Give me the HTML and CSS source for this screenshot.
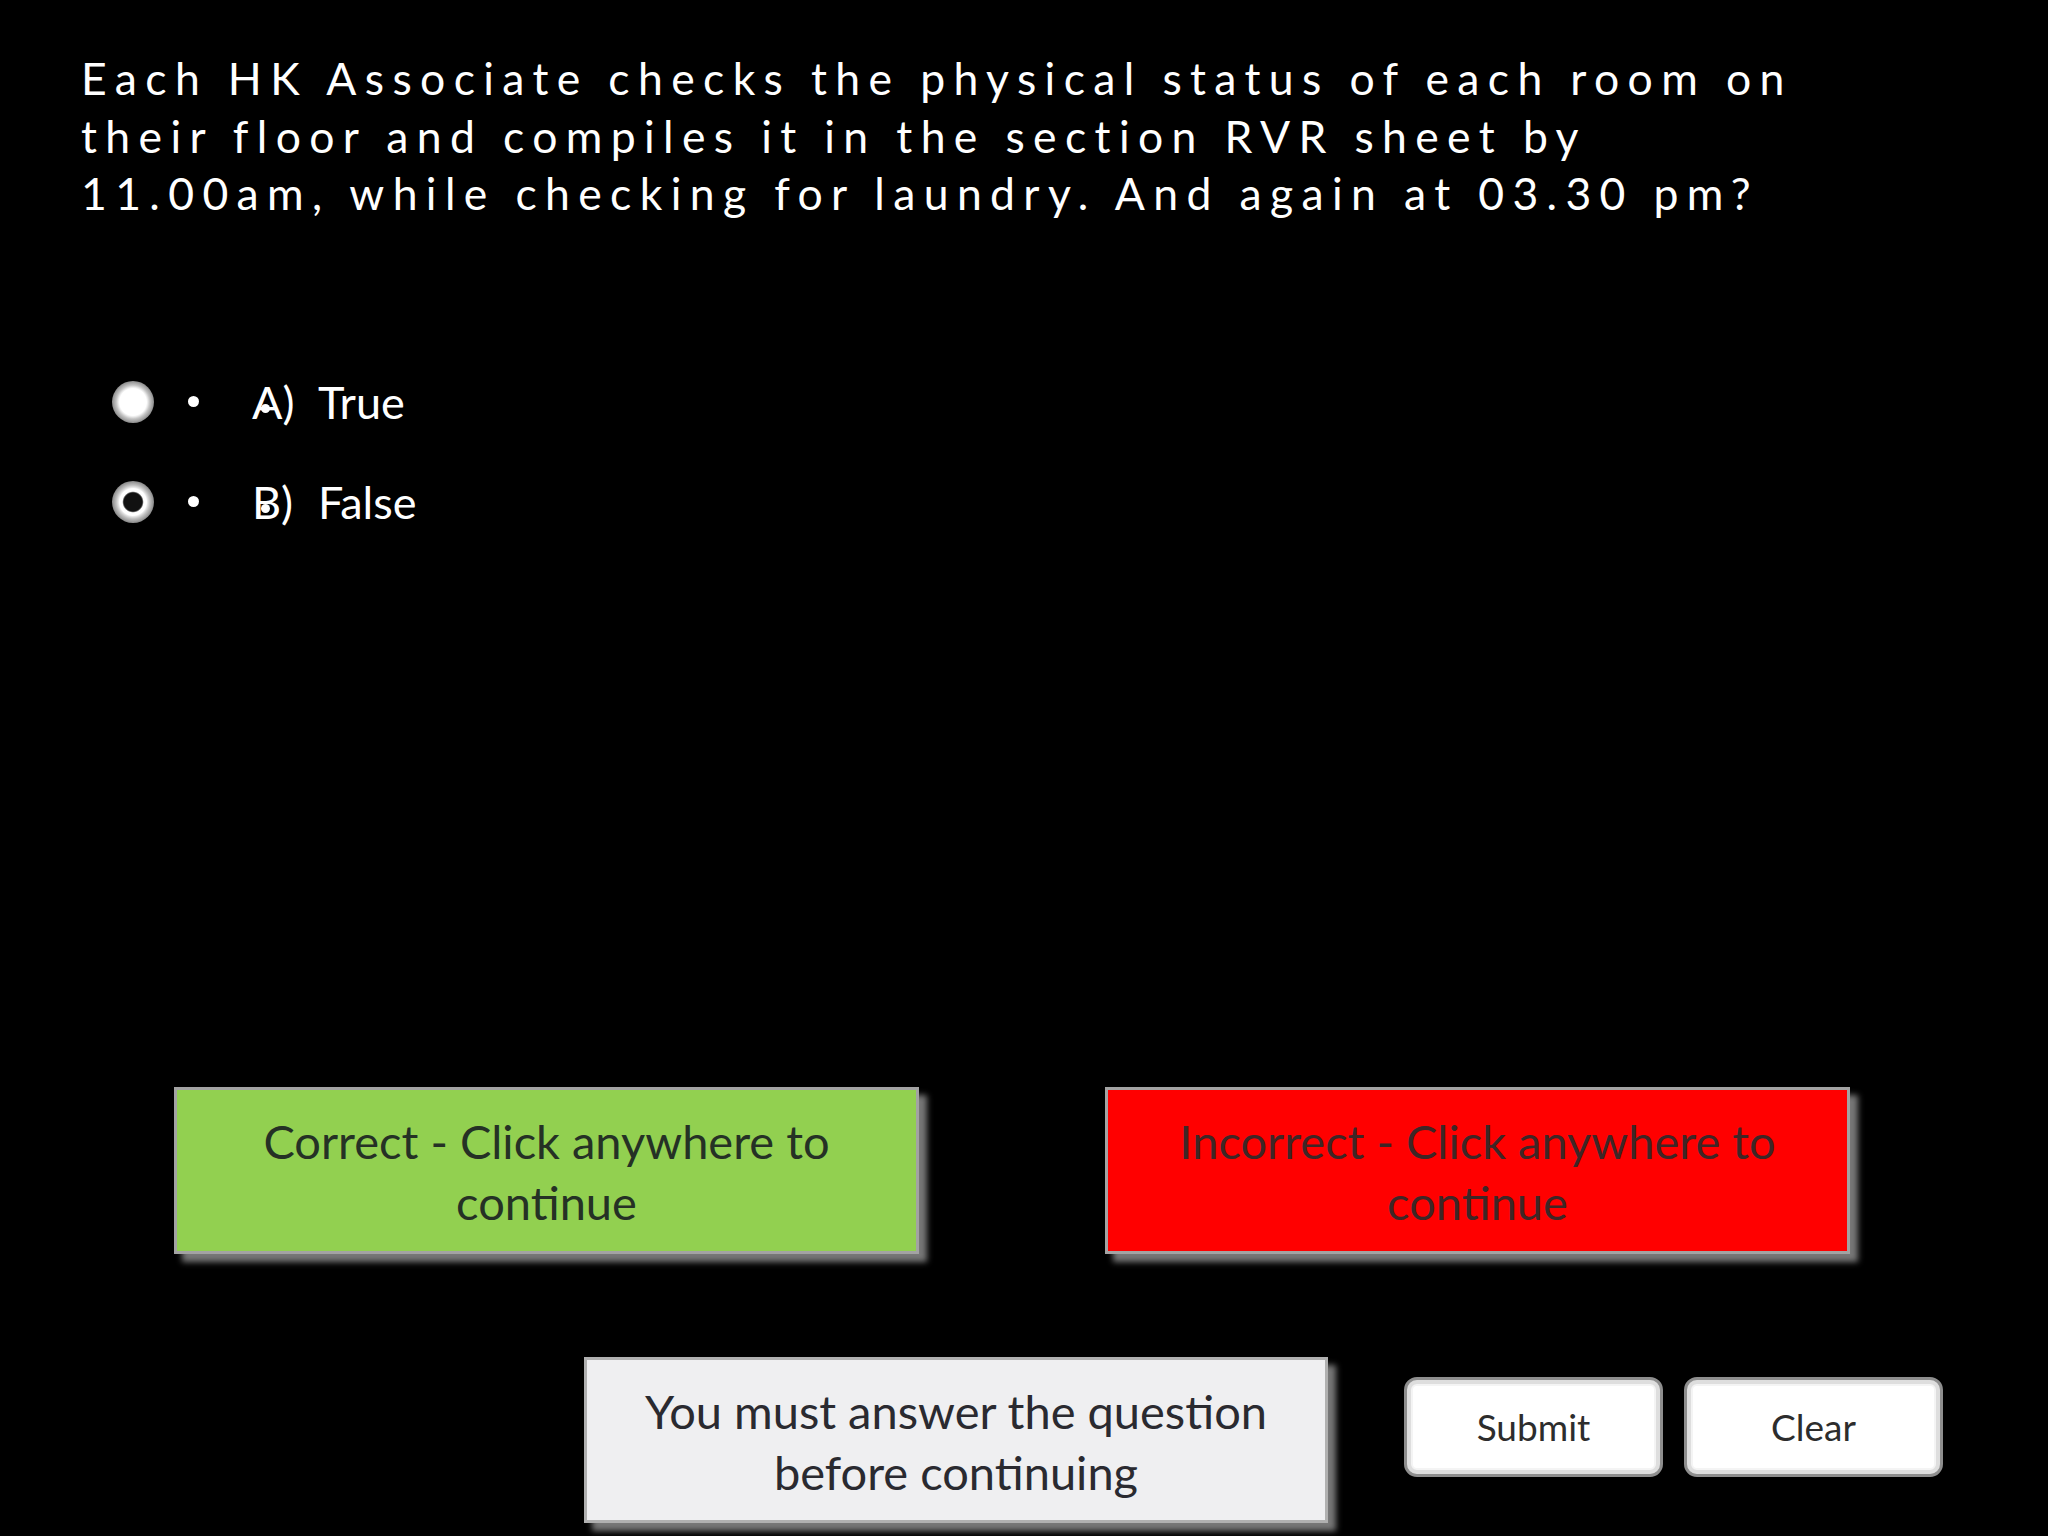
FILE: index.html
```html
<!DOCTYPE html>
<html>
<head>
<meta charset="utf-8">
<title>Quiz</title>
<link rel="stylesheet" href="styles.css">
</head>
<body>
<div class="page">
  <p class="question">Each HK Associate checks the physical status of each room on<br>their floor and compiles it in the section RVR sheet by<br>11.00am, while checking for laundry. And again at 03.30 pm?</p>
  <div class="options">
    <div class="option">
      <span class="radio"></span>
      <span class="bullet"></span>
      <span class="letter">A)</span>
      <span class="answer">True</span>
    </div>
    <div class="option">
      <span class="radio selected"></span>
      <span class="bullet"></span>
      <span class="letter">B)</span>
      <span class="answer">False</span>
    </div>
  </div>
  <div class="feedback">
    <div class="box correct">Correct - Click anywhere to<br>continue</div>
    <div class="box incorrect">Incorrect - Click anywhere to<br>continue</div>
  </div>
  <div class="bottom">
    <div class="box notice">You must answer the question<br>before continuing</div>
    <div class="buttons">
      <div class="btn">Submit</div>
      <div class="btn">Clear</div>
    </div>
  </div>
</div>
</body>
</html>
```
FILE: styles.css
```css
html, body {
  margin: 0;
  padding: 0;
  background: #000;
}
.page {
  width: 2048px;
  height: 1536px;
  overflow: hidden;
  background: #000;
  font-family: Lato, "Open Sans", sans-serif;
  color: #fff;
  display: flex;
  flex-direction: column;
}
.question {
  margin: 0;
  padding: 49px 0 0 81px;
  font-size: 44.5px;
  line-height: 57.5px;
  letter-spacing: 0.188em;
  white-space: nowrap;
}
.options {
  margin-top: 130px;
  display: flex;
  flex-direction: column;
}
.option {
  height: 100px;
  display: flex;
  align-items: center;
  padding-left: 112px;
}
.radio {
  width: 42px;
  height: 42px;
  border-radius: 50%;
  box-sizing: border-box;
  background: radial-gradient(circle closest-side, #ffffff 0 64%, #ececec 70%, #c4c4c4 80%, #a8a8a8 90%, #8c8c8c 100%);
  flex: none;
}
.radio.selected {
  background: radial-gradient(circle closest-side, #111 0 42%, #333 45%, #ffffff 51% 64%, #e4e4e4 70%, #c0c0c0 80%, #a4a4a4 90%, #888 100%);
}
.bullet {
  width: 11px;
  height: 11px;
  border-radius: 50%;
  background: #fff;
  margin-left: 34px;
  flex: none;
}
.letter {
  position: relative;
  margin-left: 53px;
  font-size: 45px;
  width: 66px;
}
.letter::before {
  content: "";
  position: absolute;
  left: 9px;
  top: 50%;
  width: 9px;
  height: 9px;
  margin-top: 2px;
  border-radius: 50%;
  background: #fff;
}
.answer {
  font-size: 45px;
}
.feedback {
  margin-top: 535px;
  display: flex;
  gap: 186px;
  padding-left: 174px;
}
.box {
  width: 745px;
  height: 167px;
  box-sizing: border-box;
  border: 3px solid #a3a3a3;
  box-shadow: 8px 8px 6px rgba(140, 140, 140, 0.85);
  display: flex;
  align-items: center;
  justify-content: center;
  text-align: center;
  font-size: 47px;
  line-height: 61px;
  color: #2b2b2b;
  padding-top: 4px;
}
.correct {
  background: #92d050;
  color: #253125;
}
.incorrect {
  background: #ff0000;
  color: #3e2626;
}
.bottom {
  margin-top: 103px;
  display: flex;
  align-items: flex-start;
  padding-left: 584px;
  gap: 76px;
}
.notice {
  width: 744px;
  height: 166px;
  background: #efeff1;
  color: #2a2a30;
  border-color: #b0b0b0;
}
.buttons {
  margin-top: 20px;
  display: flex;
  gap: 21px;
}
.btn {
  width: 259px;
  height: 100px;
  box-sizing: border-box;
  border-radius: 13px;
  border: 3px solid #8e8e8e;
  background: #fff;
  box-shadow: inset 0 0 0 4px #dedede, inset 0 0 0 6px #f4f4f4;
  display: flex;
  align-items: center;
  justify-content: center;
  font-size: 37px;
  color: #2d2d2d;
}
```
